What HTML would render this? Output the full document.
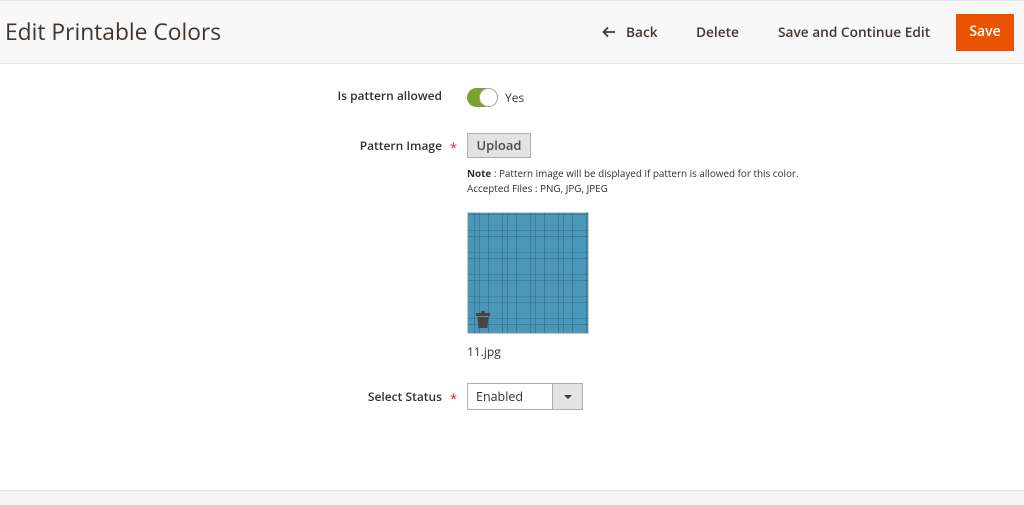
<!DOCTYPE html>
<html><head><meta charset="utf-8"><style>
*{margin:0;padding:0;box-sizing:border-box}
body{width:1024px;height:505px;background:#fff;font-family:"Open Sans","Liberation Sans",sans-serif;color:#303030;position:relative;overflow:hidden}
.hdr{position:absolute;left:0;top:0;width:1024px;height:64px;background:#f8f8f8;border-top:1px solid #e3e3e3;border-bottom:1px solid #e3e3e3}
.title{position:absolute;left:5px;top:15px;font-size:22.8px;color:#41362f}
.btn{position:absolute;top:22px;font-size:13.7px;font-weight:600;color:#41362f}
.save{position:absolute;left:956px;top:13px;width:58px;height:37px;background:#eb5202;color:#fff;font-weight:600;font-size:14px;text-align:center;line-height:36px}
.lbl{position:absolute;font-size:12px;font-weight:600;color:#303030;text-align:right}
.star{position:absolute;color:#e22626;font-size:13px}
.toggle{position:absolute;left:467px;top:88px;width:31px;height:19px;border-radius:10px;background:#79a22e}
.toggle:after{content:"";position:absolute;right:0;top:0;width:19px;height:19px;border-radius:50%;background:#fff;border:1px solid #adadad;box-sizing:border-box}
.upload{position:absolute;left:467px;top:133px;width:64px;height:25px;background:#e3e3e3;border:1px solid #adadad;font-size:13px;font-weight:600;text-align:center;line-height:23px;color:#514943}
.note{position:absolute;left:467px;top:166px;font-size:9.9px;line-height:15px;color:#303030}
.img{position:absolute;left:467px;top:212px;width:122px;height:122px;border:1px solid #ccc;background-color:#4b97ba;
background-image:
repeating-linear-gradient(90deg,transparent 0 6px,rgba(30,70,90,.35) 6px 7px,transparent 7px 11px,rgba(30,70,90,.3) 11px 12px,transparent 12px 20px,rgba(30,70,90,.35) 20px 21px,transparent 21px 28px),
repeating-linear-gradient(0deg,transparent 0 8px,rgba(30,70,90,.3) 8px 9px,transparent 9px 14px,rgba(30,70,90,.22) 14px 15px,transparent 15px 22px)}
.fn{position:absolute;left:467px;top:343px;font-size:12px;color:#303030}
.sel{position:absolute;left:467px;top:383px;width:116px;height:27px;border:1px solid #adadad;background:#fff;font-size:12.5px;line-height:25px;padding-left:8px}
.sel .arr{position:absolute;right:0;top:0;width:30px;height:25px;background:#e3e3e3;border-left:1px solid #adadad}
.sel .arr:after{content:"";position:absolute;left:11px;top:11px;border-left:4px solid transparent;border-right:4px solid transparent;border-top:4px solid #41362f}
.foot{position:absolute;left:0;top:490px;width:1024px;height:15px;background:#f5f5f5;border-top:1px solid #e3e3e3}
</style></head><body>
<div class="hdr">
<div class="title">Edit Printable Colors</div>
<div class="btn" style="left:602px"><svg width="14" height="12" viewBox="0 0 14 12" style="vertical-align:-1px;margin-right:10px"><path d="M13 6H2M6 1.5L1.5 6 6 10.5" stroke="#41362f" stroke-width="1.8" fill="none"/></svg>Back</div>
<div class="btn" style="left:696px">Delete</div>
<div class="btn" style="left:778px">Save and Continue Edit</div>
<div class="save">Save</div>
</div>
<div class="lbl" style="left:300px;width:142px;top:87px">Is pattern allowed</div>
<div class="toggle"></div>
<div style="position:absolute;left:505px;top:89px;font-size:12px">Yes</div>
<div class="lbl" style="left:300px;width:142px;top:137px">Pattern Image</div>
<div class="star" style="left:450px;top:138px">*</div>
<div class="upload">Upload</div>
<div class="note"><b>Note</b> : Pattern image will be displayed if pattern is allowed for this color.<br>Accepted Files : PNG, JPG, JPEG</div>
<div class="img"><svg width="14" height="17" viewBox="0 0 14 17" style="position:absolute;left:8px;top:98px"><rect x="5" y="0" width="4" height="2" fill="#4a4340"/><rect x="0" y="2" width="14" height="3" fill="#4a4340"/><path d="M1.5 6h11l-1 11h-9z" fill="#4a4340"/></svg></div>
<div class="fn">11.jpg</div>
<div class="lbl" style="left:300px;width:142px;top:388px">Select Status</div>
<div class="star" style="left:450px;top:389px">*</div>
<div class="sel">Enabled<div class="arr"></div></div>
<div class="foot"></div>
</body></html>
